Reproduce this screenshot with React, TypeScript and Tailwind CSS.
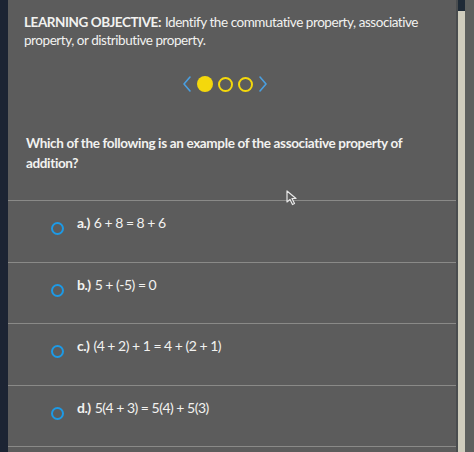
import React from "react";

const options = [
  { label: "a.)", text: "6 + 8 = 8 + 6" },
  { label: "b.)", text: "5 + (-5) = 0" },
  { label: "c.)", text: "(4 + 2) + 1 = 4 + (2 + 1)" },
  { label: "d.)", text: "5(4 + 3) = 5(4) + 5(3)" },
];

const Chevron = ({ dir }: { dir: "left" | "right" }) => (
  <svg width="10" height="18" viewBox="0 0 10 18" fill="none">
    <path
      d={dir === "left" ? "M8 2 L2 9 L8 16" : "M2 2 L8 9 L2 16"}
      stroke="#4a9fe0"
      strokeWidth="1.6"
      strokeLinecap="round"
      strokeLinejoin="round"
    />
  </svg>
);

export default function App() {
  return (
    <div
      className="w-[474px] h-[452px] flex overflow-hidden bg-[#1c2433] text-[#f2f2f0]"
      style={{ fontFamily: "Lato, 'Open Sans', sans-serif" }}
    >
      {/* left edge */}
      <div className="w-[8px] shrink-0 bg-[#1c2433]" />

      {/* main panel */}
      <div className="relative w-[448px] shrink-0 bg-[#5c5c5c] flex flex-col">
        <div className="pt-[13px] pl-[16px] pr-[20px] text-[13.5px] leading-[18px] tracking-[-0.45px]">
          <div className="flex">
            <span className="font-bold mr-[4px]">LEARNING OBJECTIVE:</span>
            <span>Identify the commutative property, associative</span>
          </div>
          <div>property, or distributive property.</div>
        </div>

        <div className="mt-[26px] flex items-center justify-center gap-[5px] pr-[14px]">
          <Chevron dir="left" />
          <span className="w-[16px] h-[16px] rounded-full bg-[#f4d80c]" />
          <span className="w-[15px] h-[15px] rounded-full border-2 border-[#f4d80c]" />
          <span className="w-[15px] h-[15px] rounded-full border-2 border-[#f4d80c]" />
          <Chevron dir="right" />
        </div>

        <div className="mt-[40px] pl-[18px] pr-[40px] text-[13.5px] leading-[20px] font-bold tracking-[-0.35px]">
          Which of the following is an example of the associative property of addition?
        </div>

        <div className="mt-[27px] flex flex-col">
          {options.map((o) => (
            <div key={o.label} className="h-[61.5px] border-t border-[#8a8a88] flex items-start">
              <span className="mt-[21px] ml-[43px] w-[13px] h-[13px] rounded-full border-[2.5px] border-[#1d9ae6]" />
              <span className="mt-[13px] ml-[13px] text-[14px] leading-[18px] tracking-[-0.5px]">
                <span className="font-bold mr-[4px]">{o.label}</span>
                {o.text}
              </span>
            </div>
          ))}
          <div className="border-t border-[#8a8a88]" />
        </div>

        {/* mouse pointer */}
        <svg
          className="absolute left-[278px] top-[190px]"
          width="12"
          height="16"
          viewBox="0 0 12 16"
        >
          <path
            d="M1 1 L1 12 L4 9.5 L6.5 14.5 L8.5 13.5 L6 8.5 L10 8.5 Z"
            fill="#5c5c5c"
            stroke="#e8e8e8"
            strokeWidth="1.2"
            strokeLinejoin="round"
          />
        </svg>
      </div>

      {/* scrollbar */}
      <div className="w-[2px] shrink-0 bg-[#4a4d4f]" />
      <div className="w-[7px] shrink-0 flex flex-col bg-[#1e2a36]">
        <div className="mt-[11px] flex-1 bg-[#cfcdbd]" />
      </div>
      <div className="flex-1 bg-[#5d605e]" />
    </div>
  );
}
